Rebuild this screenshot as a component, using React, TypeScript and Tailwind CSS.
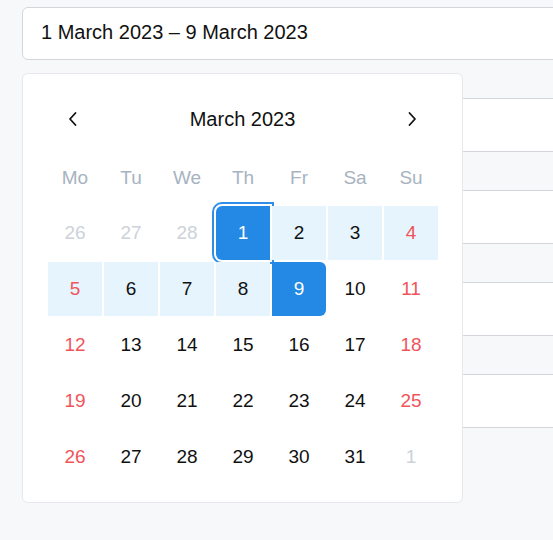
import { useState } from "react";

type Day = { n: number; out?: boolean };

const weekdays = ["Mo", "Tu", "We", "Th", "Fr", "Sa", "Su"];

function buildDays(): Day[] {
  const days: Day[] = [{ n: 26, out: true }, { n: 27, out: true }, { n: 28, out: true }];
  for (let i = 1; i <= 31; i++) days.push({ n: i });
  days.push({ n: 1, out: true });
  return days;
}

function Chevron({ dir }: { dir: "left" | "right" }) {
  return (
    <svg width="10" height="16" viewBox="0 0 10 16" fill="none" aria-hidden>
      <path
        d={dir === "left" ? "M7.5 2 L2 8 L7.5 14" : "M2.5 2 L8 8 L2.5 14"}
        stroke="#111"
        strokeWidth="1.8"
        strokeLinecap="round"
        strokeLinejoin="round"
      />
    </svg>
  );
}

function Calendar() {
  const days = buildDays();
  const start = 1;
  const end = 9;
  return (
    <div className="absolute left-[22px] top-[73px] h-[430px] w-[441px] rounded-md border border-[#e6e8eb] bg-white px-[25px] pt-[27px]">
      <div className="flex h-9 items-center justify-between">
        <button type="button" className="flex h-9 w-[50px] items-center justify-center" aria-label="Previous month">
          <Chevron dir="left" />
        </button>
        <div className="text-[20px] text-[#111]">March 2023</div>
        <button type="button" className="flex h-9 w-[50px] items-center justify-center" aria-label="Next month">
          <Chevron dir="right" />
        </button>
      </div>
      <div className="mt-[14px] grid grid-cols-[repeat(7,54px)] gap-x-[2px]">
        {weekdays.map((w) => (
          <div key={w} className="flex h-[55px] items-center justify-center text-[19px] text-[#a7b3c1]">
            {w}
          </div>
        ))}
      </div>
      <div className="grid grid-cols-[repeat(7,54px)] gap-[2px]">
        {days.map((d, i) => {
          // the red columns are the first and the last one
          const col = i % 7;
          const red = col === 0 || col === 6;
          const inMonth = !d.out;
          const isStart = inMonth && d.n === start;
          const isEnd = inMonth && d.n === end;
          const inRange = inMonth && d.n > start && d.n < end;
          let cls = "relative flex h-[54px] items-center justify-center text-[19px] ";
          if (isStart) {
            cls += "rounded-l-[6px] bg-[#2389e5] text-white outline-2 outline-offset-2 outline-[#2f8fe8] ";
          } else if (isEnd) {
            cls += "rounded-r-[6px] bg-[#2389e5] text-white ";
          } else {
            if (inRange) cls += "bg-[#e6f4fd] ";
            if (d.out) cls += "text-[#ccd2d9] ";
            else if (red) cls += "text-[#f0545b] ";
            else cls += "text-[#111] ";
          }
          return (
            <div key={i} className={cls}>
              {d.n}
            </div>
          );
        })}
      </div>
    </div>
  );
}

export default function App() {
  const [value] = useState("1 March 2023 – 9 March 2023");
  const rows = ["Contact", "", "", ""];
  return (
    <div
      className="relative h-[540px] w-[553px] overflow-hidden bg-[#f7f8fa]"
      style={{ fontFamily: '"Liberation Sans", Arial, sans-serif' }}
    >
      <div className="w-[620px] pl-[22px] pt-[7px]">
        <div className="flex h-[53px] items-center rounded-md border border-[#d3d7dc] bg-white pb-[3px] pl-[18px] text-[20px] text-[#111]">
          {value}
        </div>
        {rows.map((r, i) => (
          <div key={i}>
            <div className="h-[38px] pl-[2px] pt-[9px] text-[14px] leading-5 text-[#333]">{r}</div>
            <div className="h-[54px] border-y border-[#d3d7dc] bg-white" />
          </div>
        ))}
      </div>
      <Calendar />
    </div>
  );
}
